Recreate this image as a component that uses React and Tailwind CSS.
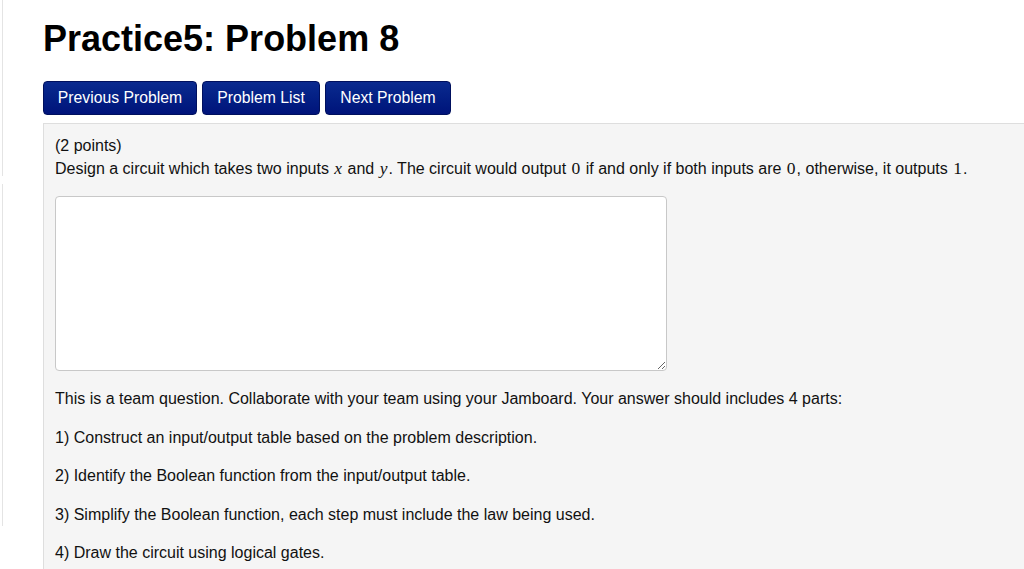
const font = { fontFamily: '"Liberation Sans", Arial, Helvetica, sans-serif' };

function M({ children, italic }) {
  return (
    <span
      className={italic ? "mx-[1px] italic text-[17.5px]" : "mx-[1px] text-[17.5px]"}
      style={{ fontFamily: '"Liberation Serif", "Times New Roman", serif' }}
    >
      {children}
    </span>
  );
}

function NavButton({ children, width }) {
  return (
    <button
      type="button"
      className={`h-[34px] ${width} rounded-[4px] border border-[#00105e] bg-gradient-to-b from-[#0b2a8f] to-[#00137a] text-[15.75px] text-white`}
    >
      {children}
    </button>
  );
}

const steps = [
  "1) Construct an input/output table based on the problem description.",
  "2) Identify the Boolean function from the input/output table.",
  "3) Simplify the Boolean function, each step must include the law being used.",
  "4) Draw the circuit using logical gates.",
];

export default function App() {
  return (
    <div className="flex h-[569px] w-[1024px] overflow-hidden bg-white text-[#111]" style={font}>
      <div className="flex w-[3px] shrink-0 flex-col">
        <div className="h-[176px] border-r border-[#e4e4e4]" />
        <div className="h-[8px]" />
        <div className="h-[342px] border-r border-[#e4e4e4]" />
      </div>
      <div className="ml-[40px] flex min-w-0 flex-1 flex-col">
        <h1 className="mt-[18px] text-[36px] font-bold leading-[42px] text-black">Practice5: Problem 8</h1>
        <div className="mt-[21px] flex gap-[5px]">
          <NavButton width="w-[154px]">Previous Problem</NavButton>
          <NavButton width="w-[118px]">Problem List</NavButton>
          <NavButton width="w-[126px]">Next Problem</NavButton>
        </div>
        <div className="mt-[8px] mr-[-20px] flex-1 border-l border-t border-[#dedede] bg-[#f5f5f5] px-[11px] pt-[10px] text-[16px] leading-[23px]">
          <p>(2 points)</p>
          <p>
            Design a circuit which takes two inputs <M italic>x</M> and <M italic>y</M>. The circuit would
            output <M>0</M> if and only if both inputs are <M>0</M>, otherwise, it outputs <M>1</M>.
          </p>
          <textarea className="mt-[16px] block h-[175px] w-[612px] resize rounded-[4px] border border-[#c8c8c8] bg-white outline-none" />
          <div className="mt-[16px] flex flex-col gap-[15.5px]">
            <p>
              This is a team question. Collaborate with your team using your Jamboard. Your answer should includes{" "}
              <span>4</span> parts:
            </p>
            {steps.map((s) => (
              <p key={s}>{s}</p>
            ))}
          </div>
        </div>
      </div>
    </div>
  );
}
